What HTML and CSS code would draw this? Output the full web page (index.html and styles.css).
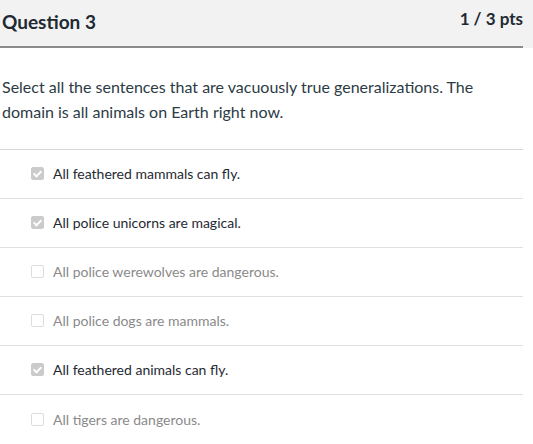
FILE: index.html
```html
<!DOCTYPE html>
<html lang="en">

<head>
    <meta charset="UTF-8">
    <meta name="viewport" content="width=device-width, initial-scale=1.0">
    <title>Question 3</title>
    <link rel="stylesheet" href="styles.css">
</head>

<body>
    <div class="header">
        <div class="header-inner">
            <h2>Question 3</h2>
            <span class="pts">1 / 3 pts</span>
        </div>
    </div>
    <div class="question">
        <p class="text">Select all the sentences that are vacuously true generalizations. The domain is all animals on Earth right now.</p>
        <div class="answers">
            <label class="answer checked"><span class="box"></span>All feathered mammals can fly.</label>
            <label class="answer checked"><span class="box"></span>All police unicorns are magical.</label>
            <label class="answer"><span class="box"></span>All police werewolves are dangerous.</label>
            <label class="answer"><span class="box"></span>All police dogs are mammals.</label>
            <label class="answer checked"><span class="box"></span>All feathered animals can fly.</label>
            <label class="answer"><span class="box"></span>All tigers are dangerous.</label>
        </div>
    </div>
</body>

</html>
```

FILE: styles.css
```css
* {
    padding: 0;
    margin: 0;
    box-sizing: border-box;
}

body {
    font-family: Lato, "Liberation Sans", sans-serif;
    color: #2d3b45;
    background: white;
}

.header {
    background-color: #f2f2f2;
    height: 48px;
}

.header-inner {
    width: 523px;
    height: 48px;
    border-bottom: 2px solid #8a8a8a;
    display: flex;
    justify-content: space-between;
    align-items: flex-start;
    padding: 0 0 0 2px;
}

h2 {
    font-size: 19px;
    font-weight: bold;
    margin-top: 10px;
    color: #1f2a33;
}

.pts {
    font-size: 17px;
    font-weight: bold;
    margin-top: 8px;
    color: #1f2a33;
}

.question {
    width: 523px;
}

.text {
    font-size: 16px;
    line-height: 25px;
    padding: 26px 0 0 2px;
    color: #2d3b45;
}

.answers {
    margin-top: 25px;
    border-top: 1px solid #d6d6d6;
}

.answer {
    display: flex;
    align-items: center;
    height: 49px;
    border-bottom: 1px solid #e0e0e0;
    padding-left: 31px;
    padding-bottom: 1px;
    font-size: 14px;
    color: #8a8a8a;
}

.answer:last-child {
    border-bottom: none;
}

.answer.checked {
    color: #1f2a33;
}

.box {
    width: 13px;
    height: 13px;
    border: 1px solid #dcdcdc;
    border-radius: 2px;
    margin-right: 9px;
    position: relative;
}

.checked .box {
    background: #cbcbcb;
    border-color: #cbcbcb;
}

.checked .box::after {
    content: "";
    position: absolute;
    left: 3px;
    top: 1px;
    width: 3px;
    height: 6px;
    border: solid white;
    border-width: 0 2px 2px 0;
    transform: rotate(45deg);
}
```
